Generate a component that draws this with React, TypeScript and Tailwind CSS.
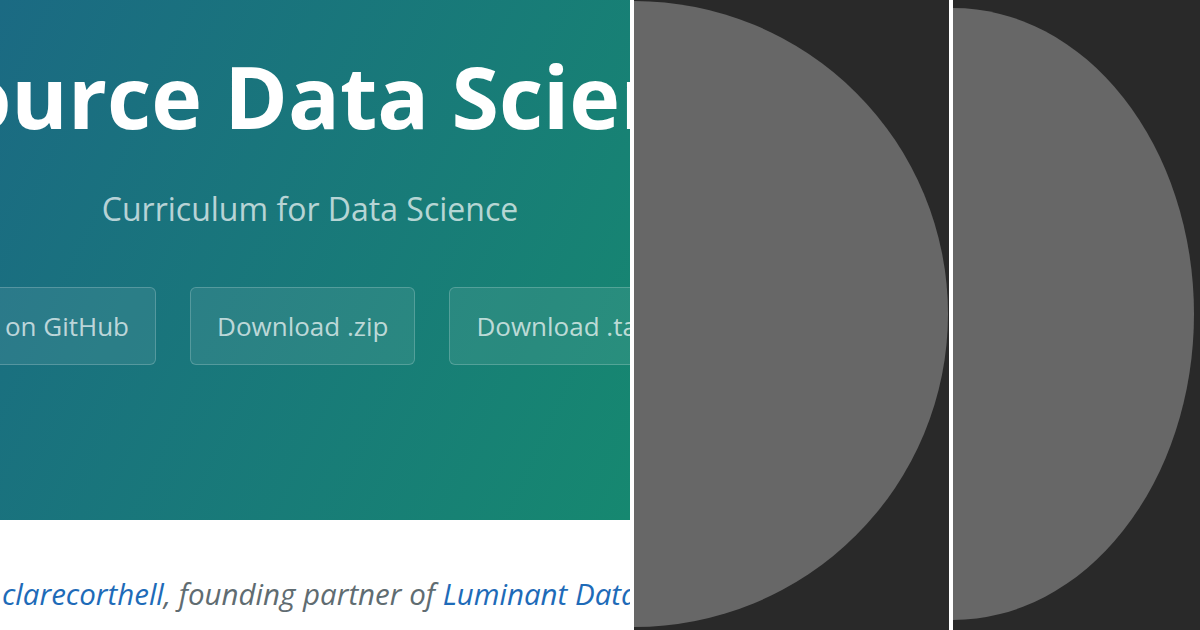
import React from 'react';

const Btn: React.FC<{ label: string }> = ({ label }) => (
  <a className="shrink-0 h-[78px] px-[26px] flex items-center rounded-[6px] border border-white/20 bg-white/[0.08] text-white/70 text-[26px] whitespace-nowrap">
    {label}
  </a>
);

const Placeholder: React.FC<{ w: number; rx: number; ry: number; cy: number }> = ({ w, rx, ry, cy }) => (
  <svg width={w} height={630} viewBox={`0 0 ${w} 630`} className="block">
    <ellipse cx={0} cy={cy} rx={rx} ry={ry} fill="#676767" />
  </svg>
);

export default function App() {
  return (
    <div className="w-[1200px] h-[630px] flex bg-white overflow-hidden font-['Open_Sans',sans-serif]">
      {/* page screenshot */}
      <div className="w-[630px] shrink-0 flex flex-col overflow-hidden">
        <header className="h-[520px] shrink-0 flex flex-col items-center bg-[linear-gradient(115deg,#1b6a83_0%,#168870_100%)]">
          <div className="w-full flex justify-center pt-[36px]">
            <h1 className="shrink-0 whitespace-nowrap text-white font-bold text-[86px] leading-[120px] translate-x-[84px]">
              Open Source Data Science Masters
            </h1>
          </div>
          <p className="mt-[32px] text-[32px] leading-[42px] text-white/70 whitespace-nowrap -translate-x-[5px]">
            Curriculum for Data Science
          </p>
          <div className="w-full flex justify-center gap-[34px] mt-[57px] -translate-x-[4px]">
            <Btn label="View on GitHub" />
            <Btn label="Download .zip" />
            <Btn label="Download .tar.gz" />
          </div>
        </header>
        <div className="pt-[52px] pl-[2px] whitespace-nowrap italic text-[29.5px] text-[#606c71]">
          <span className="text-[#1e6bb8]">clarecorthell</span>, founding partner of{' '}
          <span className="text-[#1e6bb8]">Luminant Data</span>
        </div>
      </div>

      {/* image placeholders */}
      <div className="w-[315px] ml-[4px] shrink-0 bg-[#292929]">
        <Placeholder w={315} rx={314} ry={313} cy={314} />
      </div>
      <div className="flex-1 ml-[4px] bg-[#292929]">
        <Placeholder w={247} rx={241} ry={306} cy={314} />
      </div>
    </div>
  );
}
